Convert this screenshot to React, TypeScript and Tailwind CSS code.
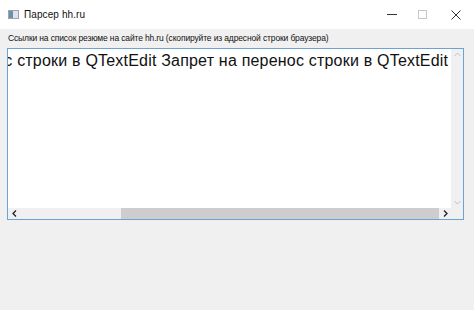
const App = () => {
  return (
    <div className="w-[474px] h-[310px] bg-[#f0f0f0] flex flex-col overflow-hidden font-['Liberation_Sans',Arial,sans-serif]">
      {/* title bar */}
      <div className="h-[29px] bg-white flex items-center shrink-0">
        <div className="ml-[8px] w-[11px] h-[9px] border border-[#9aa4ad] bg-[#dde3e8] flex">
          <div className="w-[4px] h-full bg-[#6f8fa8]" />
        </div>
        <span className="ml-[5px] text-[10px] tracking-[0.1px] text-[#111]">Парсер hh.ru</span>
        <div className="ml-auto flex items-center h-full">
          <div className="w-[31px] flex justify-center">
            <div className="w-[10px] h-px bg-[#333]" />
          </div>
          <div className="w-[31px] flex justify-center">
            <div className="w-[9px] h-[9px] border border-[#c8c8c8]" />
          </div>
          <div className="w-[36px] flex justify-center">
            <svg width="10" height="10" viewBox="0 0 10 10">
              <path d="M0.5 0.5 L9.5 9.5 M9.5 0.5 L0.5 9.5" stroke="#333" strokeWidth="1" />
            </svg>
          </div>
        </div>
      </div>

      {/* content */}
      <div className="flex flex-col px-[7px] pr-[10px] pt-[3px]">
        <div className="text-[8.5px] tracking-[-0.14px] leading-[13px] text-[#111] pl-px">
          Ссылки на список резюме на сайте hh.ru (скопируйте из адресной строки браузера)
        </div>
        <div className="mt-[3px] h-[172px] border border-[#6ba3d6] bg-white flex flex-col">
          <div className="flex flex-1 min-h-0">
            <div className="flex-1 overflow-hidden">
              <div className="whitespace-nowrap text-[16px] tracking-[0.2px] leading-[18px] text-[#111] mt-[3px] ml-[-58px]">
                перенос строки в QTextEdit Запрет на перенос строки в QTextEdit
              </div>
            </div>
            <div className="w-[12px] bg-[#f0f0f0] flex flex-col items-center justify-between py-[3px]">
              <svg width="7" height="5" viewBox="0 0 7 5">
                <path d="M0.5 4 L3.5 1 L6.5 4" stroke="#c0c0c0" fill="none" />
              </svg>
              <svg width="7" height="5" viewBox="0 0 7 5">
                <path d="M0.5 1 L3.5 4 L6.5 1" stroke="#c0c0c0" fill="none" />
              </svg>
            </div>
          </div>
          <div className="h-[11px] flex shrink-0">
            <div className="flex-1 bg-[#f0f0f0] flex items-center">
              <div className="w-[12px] flex justify-center">
                <svg width="5" height="7" viewBox="0 0 5 7">
                  <path d="M4 0.5 L1 3.5 L4 6.5" stroke="#222" strokeWidth="1.3" fill="none" />
                </svg>
              </div>
              <div className="w-[101px]" />
              <div className="flex-1 h-full bg-[#cdcdcd]" />
              <div className="w-[12px] flex justify-center">
                <svg width="5" height="7" viewBox="0 0 5 7">
                  <path d="M1 0.5 L4 3.5 L1 6.5" stroke="#222" strokeWidth="1.3" fill="none" />
                </svg>
              </div>
            </div>
            <div className="w-[12px] bg-[#f0f0f0]" />
          </div>
        </div>
      </div>
    </div>
  );
};

export default App;
